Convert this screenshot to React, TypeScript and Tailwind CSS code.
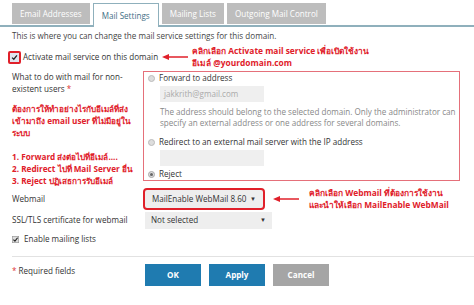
export default function App() {
    const tabs = ["Email Addresses", "Mail Settings", "Mailing Lists", "Outgoing Mail Control"];

    return (
        <div className="w-[474px] h-[305px] bg-white overflow-hidden text-[8.1px] text-[#333] font-['Open_Sans','Noto_Sans',sans-serif] leading-[12px]">
            {/* tabs */}
            <div className="flex items-end gap-[3px] pl-[12px] pt-[4px] border-b-2 border-[#8fb0bc] h-[27px]">
                {tabs.map((t, i) =>
                    i === 1 ? (
                        <div key={t} className="h-[24px] px-[8px] flex items-center bg-white border border-b-0 border-[#8fb0bc] text-[#3f6f86] -mb-[2px]">
                            {t}
                        </div>
                    ) : (
                        <div key={t} className="h-[21px] px-[8px] flex items-center bg-[#bdbdbd] text-white mb-[1px]">
                            {t}
                        </div>
                    )
                )}
            </div>

            <div className="pl-[12px] pt-[3px] h-[15px] text-[#444]">This is where you can change the mail service settings for this domain.</div>

            {/* activate */}
            <div className="flex items-center mt-[3px] pl-[8px] h-[24px]">
                <div className="w-[13px] h-[13px] border-2 border-[#e0202a] rounded-[2px] flex items-center justify-center bg-[#dfe4ee]">
                    <svg viewBox="0 0 10 10" className="w-[7px] h-[7px]"><path d="M1.5 5.2 L4 7.5 L8.5 2" stroke="#222" strokeWidth="1.8" fill="none" /></svg>
                </div>
                <span className="ml-[2px]">Activate mail service on this domain</span>
                <svg width="26" height="8" className="ml-[4px]" viewBox="0 0 26 8"><path d="M6 4 H26" stroke="#e0202a" strokeWidth="1.5" /><path d="M0 4 L7 1 L7 7 Z" fill="#e0202a" /></svg>
                <div className="ml-[4px] text-[#e0202a] font-bold text-[8.4px] leading-[12px] whitespace-nowrap">
                    <div className="h-[12px]">คลิกเลือก Activate mail service เพื่อเปิดใช้งาน</div>
                    <div className="h-[12px]">อีเมล์ @yourdomain.com</div>
                </div>
            </div>

            {/* non-existent users */}
            <div className="flex mt-[2px] h-[110px]">
                <div className="w-[143px] pl-[12px] pr-[8px] shrink-0">
                    <div>What to do with mail for non-<br />existent users <span className="text-[#d33]">*</span></div>
                    <div className="mt-[8px] text-[#e0202a] font-bold text-[8.2px] leading-[12px] whitespace-nowrap">
                        <div className="h-[12px]">ต้องการให้ทำอย่างไรกับอีเมล์ที่ส่ง</div>
                        <div className="h-[12px]">เข้ามาถึง email user ที่ไม่มีอยู่ใน</div>
                        <div className="h-[12px]">ระบบ</div>
                        <div className="h-[12px] mt-[12px]">1. Forward ส่งต่อไปที่อีเมล์....</div>
                        <div className="h-[12px]">2. Redirect ไปที่ Mail Server อื่น</div>
                        <div className="h-[12px]">3. Reject ปฏิเสธการรับอีเมล์</div>
                    </div>
                </div>
                <div className="w-[317px] h-[110px] border border-[#e5707a] pl-[4px] whitespace-nowrap">
                    <div className="flex items-center gap-[4px] h-[12px]">
                        <span className="w-[7px] h-[7px] rounded-full bg-[#ddd] border border-[#bbb]" />
                        <span>Forward to address</span>
                    </div>
                    <div className="ml-[12px] mt-[2px] w-[104px] h-[16px] bg-[#efefef] text-[#aaa] flex items-center pl-[4px]">jakkrith@gmail.com</div>
                    <div className="ml-[12px] mt-[4px] text-[#888] leading-[11px]">
                        <div>The address should belong to the selected domain. Only the administrator can</div>
                        <div>specify an external address or one address for several domains.</div>
                    </div>
                    <div className="flex items-center gap-[4px] mt-[8px] h-[12px]">
                        <span className="w-[7px] h-[7px] rounded-full bg-[#ddd] border border-[#bbb]" />
                        <span>Redirect to an external mail server with the IP address</span>
                    </div>
                    <div className="ml-[12px] mt-[2px] w-[104px] h-[16px] bg-[#efefef]" />
                    <div className="flex items-center gap-[4px] mt-[2px] h-[12px]">
                        <span className="w-[7px] h-[7px] rounded-full bg-[#ddd] border border-[#aaa] flex items-center justify-center">
                            <span className="w-[3px] h-[3px] rounded-full bg-[#666]" />
                        </span>
                        <span>Reject</span>
                    </div>
                </div>
            </div>

            {/* webmail */}
            <div className="flex items-center mt-[6px] h-[24px]">
                <div className="w-[143px] pl-[12px] shrink-0">Webmail</div>
                <div className="w-[122px] h-[22px] border-2 border-[#e0202a] rounded-[4px] bg-[#eee] flex items-center justify-between px-[7px] whitespace-nowrap">
                    <span>MailEnable WebMail 8.60</span>
                    <span className="text-[6px]">▼</span>
                </div>
                <svg width="26" height="8" className="ml-[8px]" viewBox="0 0 26 8"><path d="M6 4 H26" stroke="#e0202a" strokeWidth="1.5" /><path d="M0 4 L7 1 L7 7 Z" fill="#e0202a" /></svg>
                <div className="ml-[10px] text-[#e0202a] font-bold text-[8.4px] leading-[12px] whitespace-nowrap">
                    <div className="h-[12px]">คลิกเลือก Webmail ที่ต้องการใช้งาน</div>
                    <div className="h-[12px]">และนำให้เลือก MailEnable WebMail</div>
                </div>
            </div>

            <div className="flex items-center h-[18px]">
                <div className="w-[145px] pl-[12px] shrink-0 whitespace-nowrap">SSL/TLS certificate for webmail</div>
                <div className="w-[127px] h-[17px] bg-[#eee] flex items-center justify-between px-[6px]">
                    <span>Not selected</span>
                    <span className="text-[6px]">▼</span>
                </div>
            </div>

            <div className="flex items-center gap-[5px] pl-[12px] mt-[4px] h-[12px]">
                <svg viewBox="0 0 10 10" className="w-[7px] h-[7px]"><rect x="0.5" y="0.5" width="9" height="9" fill="#ddd" stroke="#999" /><path d="M2 5.2 L4.2 7.3 L8 2.5" stroke="#222" strokeWidth="1.6" fill="none" /></svg>
                <span>Enable mailing lists</span>
            </div>

            <div className="ml-[12px] mt-[11px] border-t border-[#e2e2e2]" />

            <div className="flex items-start mt-[7px]">
                <div className="w-[145px] pl-[12px] shrink-0 pt-[1px]"><span className="text-[#d33]">*</span> Required fields</div>
                <div className="flex gap-[8px]">
                    <button className="w-[56px] h-[22px] bg-[#1f7bb0] text-white font-bold">OK</button>
                    <button className="w-[56px] h-[22px] bg-[#1f7bb0] text-white font-bold">Apply</button>
                    <button className="w-[56px] h-[22px] bg-[#a5a5a5] text-white font-bold">Cancel</button>
                </div>
            </div>
        </div>
    );
}
